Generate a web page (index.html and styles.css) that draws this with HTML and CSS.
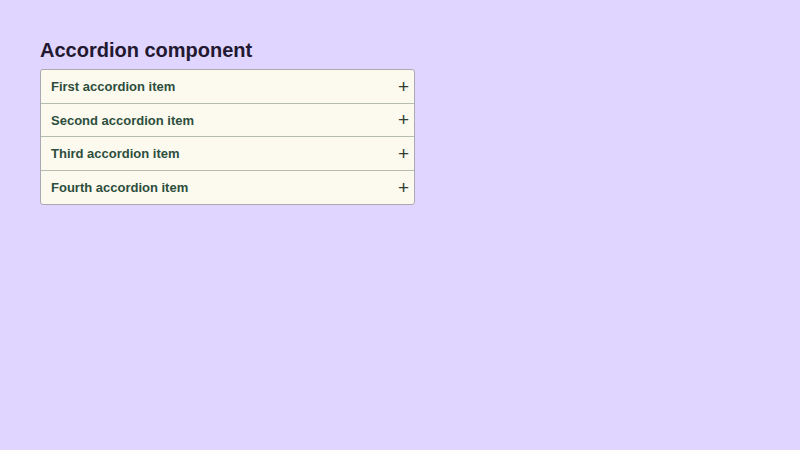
FILE: index.html
```html
<!DOCTYPE html>
<html lang="en">
<head>
    <meta charset="UTF-8">
    <meta name="viewport" content="width=device-width, initial-scale=1.0">
    <title>Accordion component</title>
    <link rel="stylesheet" href="styles.css">
</head>
<body>
    <div class="page">
        <h1>Accordion component</h1>
        <div class="accordion">
            <button class="accordion-item">
                <span>First accordion item</span>
                <span class="icon">+</span>
            </button>
            <button class="accordion-item">
                <span>Second accordion item</span>
                <span class="icon">+</span>
            </button>
            <button class="accordion-item">
                <span>Third accordion item</span>
                <span class="icon">+</span>
            </button>
            <button class="accordion-item">
                <span>Fourth accordion item</span>
                <span class="icon">+</span>
            </button>
        </div>
    </div>
</body>
</html>
```

FILE: styles.css
```css
body {
    margin: 0;
    background: #e0d5ff;
    font-family: "Liberation Sans", Arial, sans-serif;
}

.page {
    padding: 38px 40px;
}

h1 {
    margin: 0 0 7px;
    font-size: 20px;
    line-height: 24px;
    color: #22182f;
}

.accordion {
    width: 373px;
    border: 1px solid #a9a9b0;
    border-radius: 3px;
    background: #fcfaee;
    overflow: hidden;
}

.accordion-item {
    display: flex;
    justify-content: space-between;
    align-items: center;
    width: 100%;
    height: 33.5px;
    padding: 1px 5px 0 10px;
    border: none;
    border-bottom: 1px solid #b4bdb0;
    background: transparent;
    color: #2c4e3d;
    font-family: inherit;
    font-size: 13px;
    font-weight: bold;
    text-align: left;
    cursor: pointer;
}

.accordion-item:last-child {
    border-bottom: none;
}

.icon {
    font-size: 19px;
    font-weight: normal;
    color: #2f3d35;
}
```
